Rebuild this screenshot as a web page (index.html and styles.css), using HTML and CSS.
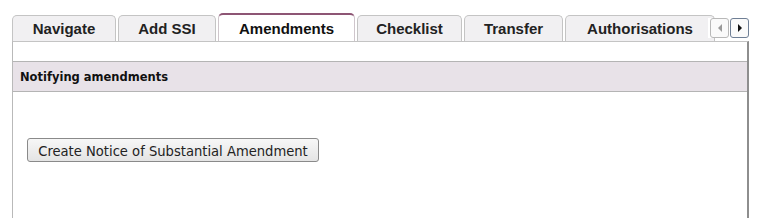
FILE: index.html
```html
<!DOCTYPE html>
<html lang="en">
<head>
    <meta charset="UTF-8">
    <title>Amendments</title>
    <link rel="stylesheet" href="styles.css">
</head>
<body>
    <div class="tabs">
        <div class="tabbar">
            <div class="tab" style="width: 104px">Navigate</div>
            <div class="tab" style="width: 98px">Add SSI</div>
            <div class="tab active" style="width: 137px">Amendments</div>
            <div class="tab" style="width: 105px">Checklist</div>
            <div class="tab" style="width: 99px">Transfer</div>
            <div class="tab last" style="width: 150px">Authorisations</div>
            <div class="scroller">
                <button class="arrow left"><svg width="6" height="8" viewBox="0 0 6 8"><path d="M5 0 L1 4 L5 8 Z" fill="#9a9a9a"/></svg></button>
                <button class="arrow right"><svg width="6" height="8" viewBox="0 0 6 8"><path d="M1 0 L5 4 L1 8 Z" fill="#111"/></svg></button>
            </div>
        </div>
        <div class="panel">
            <div class="heading">Notifying amendments</div>
            <div class="content">
                <button class="action">Create Notice of Substantial Amendment</button>
            </div>
        </div>
    </div>
</body>
</html>
```

FILE: styles.css
```css
body {
    margin: 0;
    padding: 0;
    background: #fff;
    font-family: 'Liberation Sans', Arial, sans-serif;
}

.tabs {
    margin-left: 12px;
    width: 737px;
    padding-top: 13px;
}

.tabbar {
    display: flex;
    align-items: flex-end;
    gap: 2px;
    height: 28px;
    position: relative;
    overflow: hidden;
}

.tab {
    flex-shrink: 0;
    box-sizing: border-box;
    height: 26px;
    padding-top: 4px;
    text-align: center;
    font-weight: bold;
    font-size: 15px;
    color: #222;
    background: #f1f0f2;
    border: 1px solid #c4c4c4;
    border-bottom: none;
    border-radius: 5px 5px 0 0;
}

.tab.active {
    height: 28px;
    padding-top: 5px;
    background: #fff;
    border-color: #cfc6cc;
    border-top: 2px solid #8d5574;
    color: #111;
}

.scroller {
    position: absolute;
    right: 0;
    top: 5px;
    display: flex;
    gap: 1px;
    background: #fff;
    padding-left: 2px;
}

.arrow {
    box-sizing: border-box;
    width: 19px;
    height: 20px;
    padding: 0;
    display: flex;
    align-items: center;
    justify-content: center;
    background: #fafafa;
    border: 1px solid #b8b8b8;
    border-radius: 3px;
}

.arrow.right {
    border-color: #6f7f95;
}

.panel {
    box-sizing: border-box;
    height: 177px;
    border-left: 1px solid #b9b9b9;
    border-right: 2px solid #8e8e8e;
    border-top: 1px solid #c4c4c4;
    padding-top: 19px;
}

.heading {
    box-sizing: border-box;
    height: 31px;
    padding: 8px 0 0 7px;
    background: #e8e2e8;
    border-top: 1px solid #b4b4b4;
    border-bottom: 1px solid #b4b4b4;
    font-family: 'DejaVu Sans', Verdana, sans-serif;
    font-weight: bold;
    font-size: 11.5px;
    color: #111;
}

.content {
    padding: 46px 0 0 14px;
}

.action {
    box-sizing: border-box;
    height: 24px;
    width: 292px;
    padding: 0 4px;
    font-family: 'DejaVu Sans Condensed', 'DejaVu Sans', sans-serif;
    font-size: 14.6px;
    color: #222;
    background: linear-gradient(#f7f7f7, #e4e4e4);
    border: 1px solid #8a8a8a;
    border-radius: 3px;
}
```
